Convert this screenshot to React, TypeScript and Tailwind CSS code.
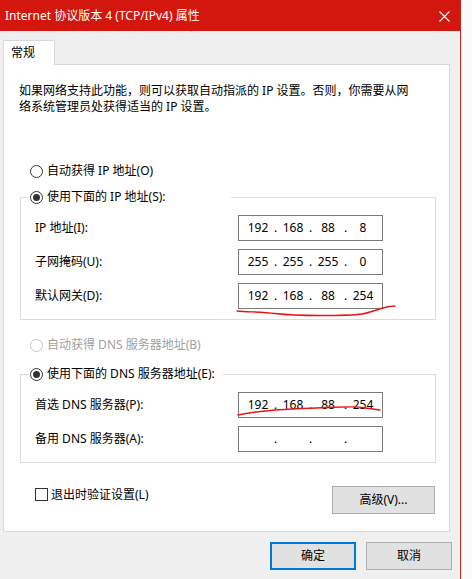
import React from 'react';

const font = "font-[Noto_Sans,Noto_Sans_CJK_SC,sans-serif]";

const Radio = ({ checked = false, disabled = false }: { checked?: boolean; disabled?: boolean }) => (
  <span
    className={`flex items-center justify-center w-[13px] h-[13px] rounded-full border bg-white shrink-0 ${
      disabled ? 'border-[#c6c6c6]' : 'border-[#333333]'
    }`}
  >
    {checked && <span className="w-[7px] h-[7px] rounded-full bg-[#333333]" />}
  </span>
);

const IpField = ({ parts }: { parts: string[] }) => (
  <div className="flex items-center w-[145px] h-[26px] border border-[#7a7a7a] bg-white pl-[5px] text-[12px] text-black">
    {parts.map((p, i) => (
      <React.Fragment key={i}>
        <span className="w-[28px] text-center">{p}</span>
        {i < 3 && <span className="w-[7px] text-center">.</span>}
      </React.Fragment>
    ))}
  </div>
);

const FieldRow = ({ label, parts }: { label: string; parts: string[] }) => (
  <div className="flex items-center h-[26px]">
    <span className="flex-1 text-[12px] text-black">{label}</span>
    <IpField parts={parts} />
  </div>
);

const GroupBox = ({ legend, legendWidth, children, pb }: { legend: string; legendWidth: string; children: React.ReactNode; pb: string }) => (
  <div className={`relative ml-[16px] w-[416px] border border-[#dcdcdc] pt-[17px] pl-[14px] pr-[52px] ${pb} flex flex-col gap-[8px]`}>
    <div className={`absolute left-[8px] top-[-9px] h-[16px] ${legendWidth} bg-white flex items-center gap-[4px] pl-[1px]`}>
      <Radio checked />
      <span className="text-[12px] text-black">{legend}</span>
    </div>
    {children}
  </div>
);

export default function App() {
  return (
    <div className={`relative w-[472px] h-[579px] overflow-hidden bg-[#fafafa] flex ${font}`}>
      {/* dialog window */}
      <div className="w-[461px] h-full bg-[#f0f0f0] border-r border-[#c9271b] flex flex-col">
        <div className="h-[31px] bg-[#d4170e] flex items-center justify-between pl-[5px] pr-[10px] shrink-0">
          <span className="text-[12px] text-white">Internet 协议版本 4 (TCP/IPv4) 属性</span>
          <svg width="11" height="11" viewBox="0 0 11 11" className="mt-[1px]">
            <path d="M0.5 0.5 L10.5 10.5 M10.5 0.5 L0.5 10.5" stroke="#ffffff" strokeWidth="1.1" />
          </svg>
        </div>

        <div className="px-[3px] flex flex-col">
          {/* tab */}
          <div className="relative z-10 mt-[9px] mb-[-1px] w-[52px] h-[25px] border border-b-0 border-[#d9d9d9] bg-white flex items-center pl-[7px]">
            <span className="text-[12px] text-black">常规</span>
          </div>

          {/* tab page */}
          <div className="w-[447px] h-[468px] border border-[#d9d9d9] bg-white flex flex-col">
            <p className="pt-[18px] pl-[15px] text-[12px] leading-[16px] text-black">
              如果网络支持此功能，则可以获取自动指派的 IP 设置。否则，你需要从网
              <br />
              络系统管理员处获得适当的 IP 设置。
            </p>

            <div className="mt-[48px] ml-[26px] h-[16px] flex items-center gap-[4px]">
              <Radio />
              <span className="text-[12px] text-black">自动获得 IP 地址(O)</span>
            </div>

            <div className="mt-[18px]">
              <GroupBox legend="使用下面的 IP 地址(S):" legendWidth="w-[202px]" pb="pb-[10px]">
                <FieldRow label="IP 地址(I):" parts={['192', '168', '88', '8']} />
                <FieldRow label="子网掩码(U):" parts={['255', '255', '255', '0']} />
                <FieldRow label="默认网关(D):" parts={['192', '168', '88', '254']} />
              </GroupBox>
            </div>

            <div className="mt-[17px] ml-[26px] h-[16px] flex items-center gap-[4px]">
              <Radio disabled />
              <span className="text-[12px] text-[#a0a0a0]">自动获得 DNS 服务器地址(B)</span>
            </div>

            <div className="mt-[21px]">
              <GroupBox legend="使用下面的 DNS 服务器地址(E):" legendWidth="w-[194px]" pb="pb-[10px]">
                <FieldRow label="首选 DNS 服务器(P):" parts={['192', '168', '88', '254']} />
                <FieldRow label="备用 DNS 服务器(A):" parts={['', '', '', '']} />
              </GroupBox>
            </div>

            <div className="mt-[23px] pl-[31px] pr-[14px] flex items-start justify-between">
              <div className="mt-[2px] flex items-center gap-[3px]">
                <span className="w-[13px] h-[13px] border border-[#333333] bg-white" />
                <span className="text-[12px] leading-[13px] text-black">退出时验证设置(L)</span>
              </div>
              <button className="w-[103px] h-[28px] border border-[#adadad] bg-[#e1e1e1] text-[12px] text-black">
                高级(V)...
              </button>
            </div>
          </div>

          {/* dialog buttons */}
          <div className="mt-[10px] flex justify-end gap-[10px] pr-[5px]">
            <button className="w-[86px] h-[28px] border-2 border-[#0078d7] bg-[#e1e1e1] text-[12px] text-black">
              确定
            </button>
            <button className="w-[86px] h-[28px] border border-[#adadad] bg-[#e1e1e1] text-[12px] text-black">
              取消
            </button>
          </div>
        </div>
      </div>

      {/* red pen annotations */}
      <svg className="absolute left-0 top-0 pointer-events-none" width="472" height="579">
        <path
          d="M237 311 C 250 312, 262 312, 275 313.5 S 300 315.5, 320 315.5 S 355 315, 362 314 S 378 309, 385 307.5 S 392 306, 395 306"
          fill="none"
          stroke="#ee1111"
          strokeWidth="1.4"
          strokeLinecap="round"
        />
        <path
          d="M238 415 C 245 413.5, 255 412, 268 410.7 S 300 408.5, 333 407.3 S 360 407.5, 367 408.3 S 376 409.5, 380 410"
          fill="none"
          stroke="#ee1111"
          strokeWidth="1.4"
          strokeLinecap="round"
        />
      </svg>
    </div>
  );
}
